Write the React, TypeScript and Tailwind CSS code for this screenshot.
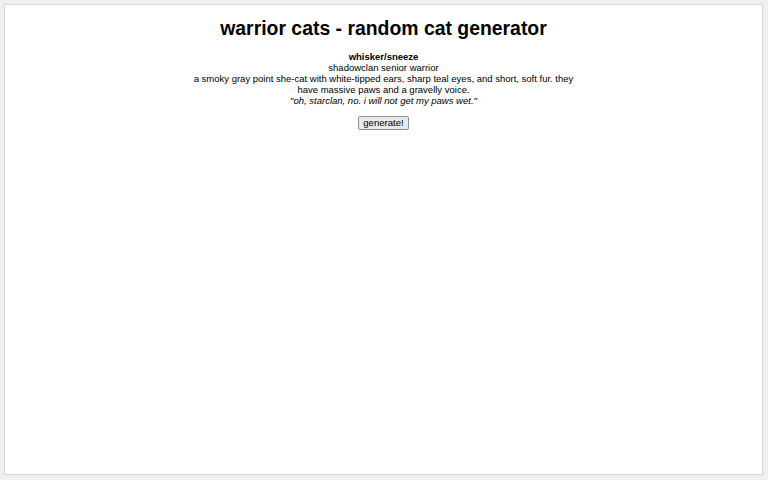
export default function App() {
  return (
    <div className="h-[480px] w-[768px] bg-[#f0f0f0] p-[4px_5px_5px_4px] font-['Liberation_Sans',Arial,sans-serif] text-black">
      <div className="flex h-full flex-col items-center border border-[#d8d8d8] bg-white pt-[11px]">
        <h1 className="text-[19.4px] font-bold leading-[24px]">warrior cats - random cat generator</h1>
        <div className="mt-[11px] w-[384px] text-center text-[9.5px] leading-[11px]">
          <div className="font-bold">whisker/sneeze</div>
          <div>shadowclan senior warrior</div>
          <div>
            a smoky gray point she-cat with white-tipped ears, sharp teal eyes, and short, soft fur. they have
            massive paws and a gravelly voice.
          </div>
          <div className="italic">"oh, starclan, no. i will not get my paws wet."</div>
        </div>
        <button className="mt-[10px] rounded-[2px] border border-[#8f8f8f] bg-[#e9e9e9] px-[4px] text-[9.6px] leading-[12px]">
          generate!
        </button>
      </div>
    </div>
  );
}
